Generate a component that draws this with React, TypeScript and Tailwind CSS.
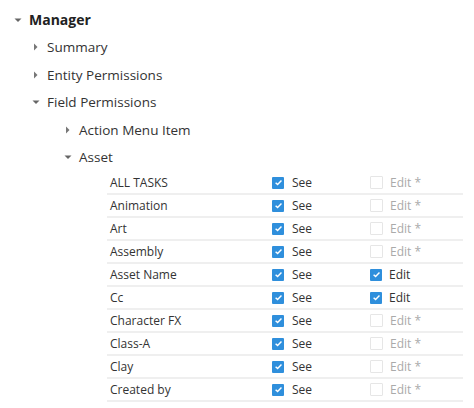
import React from "react";

const rows: { name: string; edit: boolean }[] = [
  { name: "ALL TASKS", edit: false },
  { name: "Animation", edit: false },
  { name: "Art", edit: false },
  { name: "Assembly", edit: false },
  { name: "Asset Name", edit: true },
  { name: "Cc", edit: true },
  { name: "Character FX", edit: false },
  { name: "Class-A", edit: false },
  { name: "Clay", edit: false },
  { name: "Created by", edit: false },
];

function Caret({ open }: { open: boolean }) {
  return open ? (
    <svg width="8" height="8" viewBox="0 0 8 8" className="shrink-0">
      <path d="M0.5 2.5 L7.5 2.5 L4 6 Z" fill="#666" />
    </svg>
  ) : (
    <svg width="8" height="8" viewBox="0 0 8 8" className="shrink-0">
      <path d="M2 0.5 L5.5 4 L2 7.5 Z" fill="#777" />
    </svg>
  );
}

function Checked() {
  return (
    <span className="flex h-[12px] w-[12px] items-center justify-center rounded-[1px] bg-[#2f8fdc]">
      <svg width="9" height="9" viewBox="0 0 10 10">
        <path d="M1.8 5.2 L4 7.3 L8.3 2.8" stroke="white" strokeWidth="1.6" fill="none" />
      </svg>
    </span>
  );
}

function Unchecked() {
  return <span className="block h-[13px] w-[13px] rounded-[1px] border border-[#e6e6e6] bg-white" />;
}

function TreeItem({ open, label, indent, bold }: { open: boolean; label: string; indent: string; bold?: boolean }) {
  return (
    <div className={`flex h-[27.5px] items-center gap-[7px] ${indent}`}>
      <Caret open={open} />
      <span className={bold ? "text-[14px] font-bold text-[#222]" : "text-[13.5px] text-[#333]"}>{label}</span>
    </div>
  );
}

export default function App() {
  return (
    <div
      className="h-[408px] w-[474px] overflow-hidden bg-white pt-[6px]"
      style={{ fontFamily: '"Open Sans", "Noto Sans", sans-serif' }}
    >
      <TreeItem open label="Manager" indent="pl-[14px]" bold />
      <TreeItem open={false} label="Summary" indent="pl-[32px]" />
      <TreeItem open={false} label="Entity Permissions" indent="pl-[32px]" />
      <TreeItem open label="Field Permissions" indent="pl-[32px]" />
      <TreeItem open={false} label="Action Menu Item" indent="pl-[64px]" />
      <TreeItem open label="Asset" indent="pl-[64px]" />
      <div className="ml-[107px] w-[356px] pt-[1px]">
        {rows.map((r) => (
          <div key={r.name} className="flex h-[23px] items-center border-b-2 border-[#efefef] text-[12px]">
            <span className="w-[165px] pl-[3px] text-[#333]">{r.name}</span>
            <span className="flex w-[98px] items-center gap-[8px]">
              <Checked />
              <span className="text-[#333]">See</span>
            </span>
            <span className="flex items-center gap-[7px]">
              {r.edit ? <Checked /> : <Unchecked />}
              <span className={r.edit ? "text-[#333]" : "text-[#aaa]"}>{r.edit ? "Edit" : "Edit *"}</span>
            </span>
          </div>
        ))}
      </div>
    </div>
  );
}
